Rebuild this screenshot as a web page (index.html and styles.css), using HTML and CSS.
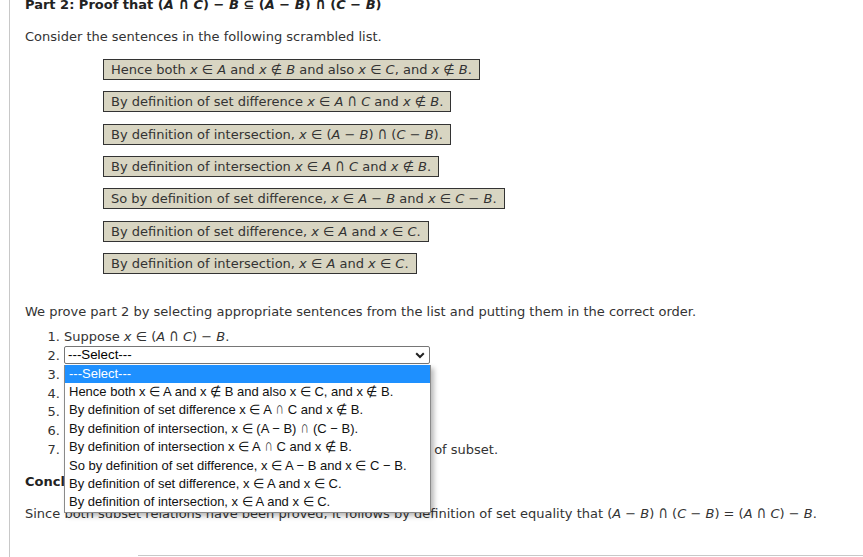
FILE: index.html
```html
<!DOCTYPE html>
<html>
<head>
<meta charset="utf-8">
<link rel="stylesheet" href="styles.css">
</head>
<body>
<div class="page">
  <div class="content">
    <h3 class="title">Part 2: Proof that (<i>A</i> <span class="cap">∩</span> <i>C</i>) − <i>B</i> ⊆ (<i>A</i> − <i>B</i>) <span class="cap">∩</span> (<i>C</i> − <i>B</i>)</h3>
    <p class="intro">Consider the sentences in the following scrambled list.</p>
    <div class="scrambled">
      <div class="sentence">Hence both <i>x</i> ∈ <i>A</i> and <i>x</i> ∉ <i>B</i> and also <i>x</i> ∈ <i>C</i>, and <i>x</i> ∉ <i>B</i>.</div>
      <div class="sentence">By definition of set difference <i>x</i> ∈ <i>A</i> <span class="cap">∩</span> <i>C</i> and <i>x</i> ∉ <i>B</i>.</div>
      <div class="sentence">By definition of intersection, <i>x</i> ∈ (<i>A</i> − <i>B</i>) <span class="cap">∩</span> (<i>C</i> − <i>B</i>).</div>
      <div class="sentence">By definition of intersection <i>x</i> ∈ <i>A</i> <span class="cap">∩</span> <i>C</i> and <i>x</i> ∉ <i>B</i>.</div>
      <div class="sentence">So by definition of set difference, <i>x</i> ∈ <i>A</i> − <i>B</i> and <i>x</i> ∈ <i>C</i> − <i>B</i>.</div>
      <div class="sentence">By definition of set difference, <i>x</i> ∈ <i>A</i> and <i>x</i> ∈ <i>C</i>.</div>
      <div class="sentence">By definition of intersection, <i>x</i> ∈ <i>A</i> and <i>x</i> ∈ <i>C</i>.</div>
    </div>
    <p class="prove">We prove part 2 by selecting appropriate sentences from the list and putting them in the correct order.</p>
    <ol class="steps">
      <li>Suppose <i>x</i> ∈ (<i>A</i> <span class="cap">∩</span> <i>C</i>) − <i>B</i>.</li>
      <li>
        <div class="select"><span class="select-text">---Select---</span><svg class="chev" width="10" height="7" viewBox="0 0 10 7"><path d="M1.2 1.3 L5 5 L8.8 1.3" fill="none" stroke="#222" stroke-width="2"/></svg></div>
        <div class="dropdown">
          <div class="opt active">---Select---</div>
          <div class="opt">Hence both x ∈ A and x ∉ B and also x ∈ C, and x ∉ B.</div>
          <div class="opt">By definition of set difference x ∈ A <span class="capo">∩</span> C and x ∉ B.</div>
          <div class="opt">By definition of intersection, x ∈ (A − B) <span class="capo">∩</span> (C − B).</div>
          <div class="opt">By definition of intersection x ∈ A <span class="capo">∩</span> C and x ∉ B.</div>
          <div class="opt">So by definition of set difference, x ∈ A − B and x ∈ C − B.</div>
          <div class="opt">By definition of set difference, x ∈ A and x ∈ C.</div>
          <div class="opt">By definition of intersection, x ∈ A and x ∈ C.</div>
        </div>
      </li>
      <li><div class="select"><span class="select-text">---Select---</span></div></li>
      <li><div class="select"><span class="select-text">---Select---</span></div></li>
      <li><div class="select"><span class="select-text">---Select---</span></div></li>
      <li><div class="select"><span class="select-text">---Select---</span></div></li>
      <li><div class="select"><span class="select-text">---Select---</span></div> of subset.</li>
    </ol>
    <p class="concl"><b>Conclusion:</b></p>
    <p class="since">Since both subset relations have been proved, it follows by definition of set equality that (<i>A</i> − <i>B</i>) <span class="cap">∩</span> (<i>C</i> − <i>B</i>) = (<i>A</i> <span class="cap">∩</span> <i>C</i>) − <i>B</i>.</p>
    <div class="rule"></div>
  </div>
</div>
</body>
</html>
```
FILE: styles.css
```css
html, body {
  margin: 0;
  padding: 0;
  background: #fff;
  overflow: hidden;
}
body {
  font-family: "DejaVu Sans", Verdana, sans-serif;
  font-size: 13px;
  color: #333;
}
.page {
  margin-left: 9px;
  border-left: 1px solid #c8c8c8;
  height: 557px;
  overflow: hidden;
}
.content {
  padding-left: 15px;
}
.cap {
  display: inline-block;
  line-height: 13px;
  transform: scaleY(1.3);
  transform-origin: 50% 11px;
}
.capo {
  display: inline-block;
  line-height: 13px;
  transform: scale(0.85, 1.3);
  transform-origin: 50% 11px;
}
.title {
  margin: -3.5px 0 0 0;
  font-size: 13px;
  line-height: 16px;
  font-weight: bold;
  color: #222;
}
.intro {
  margin: 16px 0 0 0;
  line-height: 16px;
}
.scrambled {
  margin: 14.5px 0 0 78px;
  display: flex;
  flex-direction: column;
  align-items: flex-start;
  gap: 11.33px;
}
.sentence {
  border: 1px solid #333;
  background: #d8d5c2;
  line-height: 19px;
  padding: 0 7px 0 7px;
  color: #333;
  white-space: nowrap;
}
.prove {
  margin: 30px 0 0 0;
  line-height: 16px;
}
.steps {
  margin: 8.2px 0 0 0;
  padding-left: 39px;
  list-style: decimal;
}
.steps li {
  height: 18.8px;
  line-height: 18.8px;
  position: relative;
  white-space: nowrap;
}
.select {
  display: inline-block;
  vertical-align: top;
  box-sizing: border-box;
  width: 366px;
  height: 18px;
  margin-top: -1px;
  border: 1px solid #767676;
  border-radius: 2px;
  background: #fff;
  font-family: "Liberation Sans", Arial, sans-serif;
  font-size: 13.33px;
  line-height: 16px;
  color: #000;
  position: relative;
}
.select-text {
  padding-left: 3px;
}
.chev {
  position: absolute;
  right: 4px;
  top: 5px;
}
.dropdown {
  position: absolute;
  left: 0;
  top: 17.7px;
  width: 367px;
  box-sizing: border-box;
  border: 1px solid #8a8a8a;
  border-top: none;
  background: #fff;
  box-shadow: 3px 3px 5px rgba(0, 0, 0, 0.28);
  font-family: "Liberation Sans", Arial, sans-serif;
  font-size: 13px;
  color: #111;
  z-index: 5;
}
.opt {
  height: 18.4px;
  line-height: 18.4px;
  padding-left: 4px;
}
.opt.active {
  background: #1e90ff;
  color: #fff;
}
.concl {
  margin: 14.6px 0 0 0;
  line-height: 16px;
  color: #222;
}
.since {
  margin: 15.3px 0 0 0;
  line-height: 16px;
  white-space: nowrap;
}
.rule {
  margin: 33.5px 0 0 113px;
  border-top: 1px solid #c8c8c8;
}
```
